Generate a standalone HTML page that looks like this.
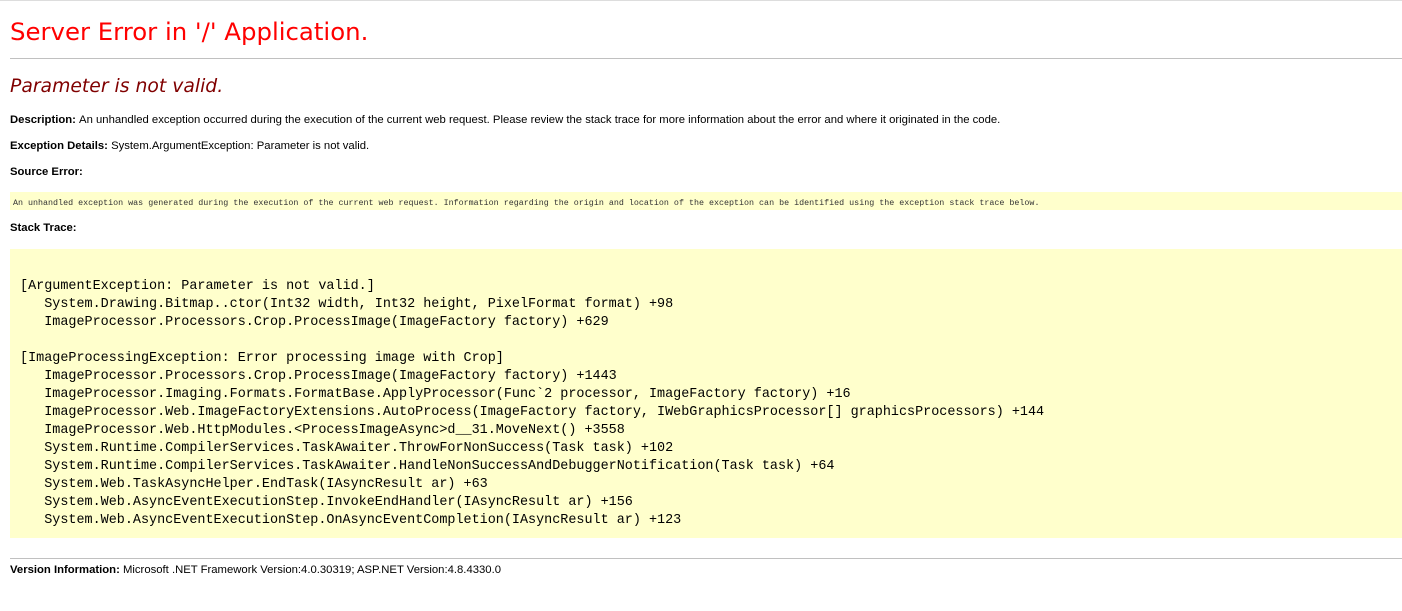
<!DOCTYPE html>
<html><head><meta charset="utf-8"><style>
body{margin:0;background:#fff;width:1402px;height:611px;position:relative;overflow:hidden;font-family:"Liberation Sans",sans-serif;font-size:11.3px;color:#000}
.a{position:absolute;white-space:nowrap}
h1{position:absolute;left:10px;top:17px;margin:0;font-weight:normal;font-size:24.4px;color:#f00;font-family:"DejaVu Sans",sans-serif;line-height:30px}
h2{position:absolute;left:10px;top:74px;margin:0;font-weight:normal;font-style:italic;font-size:18.8px;color:#800000;line-height:26px;font-family:"DejaVu Sans",sans-serif}
.hr{position:absolute;left:10px;right:0;height:1px;background:#c0c0c0}
b{font-weight:bold}
.y{position:absolute;left:10px;right:0;background:#ffffcc}
pre{margin:0;font-family:"Liberation Mono",monospace;font-size:13.45px;line-height:18px;color:#000}
</style></head><body>
<div class="hr" style="top:0;left:0;background:#ddd"></div>
<h1>Server Error in '/' Application.</h1>
<div class="hr" style="top:58px"></div>
<h2>Parameter is not valid.</h2>
<div class="a" style="left:10px;top:114px"><b>Description: </b>An unhandled exception occurred during the execution of the current web request. Please review the stack trace for more information about the error and where it originated in the code.</div>
<div class="a" style="left:10px;top:140px"><b>Exception Details: </b>System.ArgumentException: Parameter is not valid.</div>
<div class="a" style="left:10px;top:166px"><b>Source Error:</b></div>
<div class="y" style="top:192px;height:18px"><div class="a" style="left:3px;top:6px;font-family:'Liberation Mono',monospace;font-size:8.35px;color:#333">An unhandled exception was generated during the execution of the current web request. Information regarding the origin and location of the exception can be identified using the exception stack trace below.</div></div>
<div class="a" style="left:10px;top:222px"><b>Stack Trace:</b></div>
<div class="y" style="top:249px;height:289px"><pre style="position:absolute;left:10px;top:29px">[ArgumentException: Parameter is not valid.]
   System.Drawing.Bitmap..ctor(Int32 width, Int32 height, PixelFormat format) +98
   ImageProcessor.Processors.Crop.ProcessImage(ImageFactory factory) +629

[ImageProcessingException: Error processing image with Crop]
   ImageProcessor.Processors.Crop.ProcessImage(ImageFactory factory) +1443
   ImageProcessor.Imaging.Formats.FormatBase.ApplyProcessor(Func`2 processor, ImageFactory factory) +16
   ImageProcessor.Web.ImageFactoryExtensions.AutoProcess(ImageFactory factory, IWebGraphicsProcessor[] graphicsProcessors) +144
   ImageProcessor.Web.HttpModules.&lt;ProcessImageAsync&gt;d__31.MoveNext() +3558
   System.Runtime.CompilerServices.TaskAwaiter.ThrowForNonSuccess(Task task) +102
   System.Runtime.CompilerServices.TaskAwaiter.HandleNonSuccessAndDebuggerNotification(Task task) +64
   System.Web.TaskAsyncHelper.EndTask(IAsyncResult ar) +63
   System.Web.AsyncEventExecutionStep.InvokeEndHandler(IAsyncResult ar) +156
   System.Web.AsyncEventExecutionStep.OnAsyncEventCompletion(IAsyncResult ar) +123</pre></div>
<div class="hr" style="top:558px"></div>
<div class="a" style="left:10px;top:564px"><b>Version Information:</b> Microsoft .NET Framework Version:4.0.30319; ASP.NET Version:4.8.4330.0</div>
</body></html>
